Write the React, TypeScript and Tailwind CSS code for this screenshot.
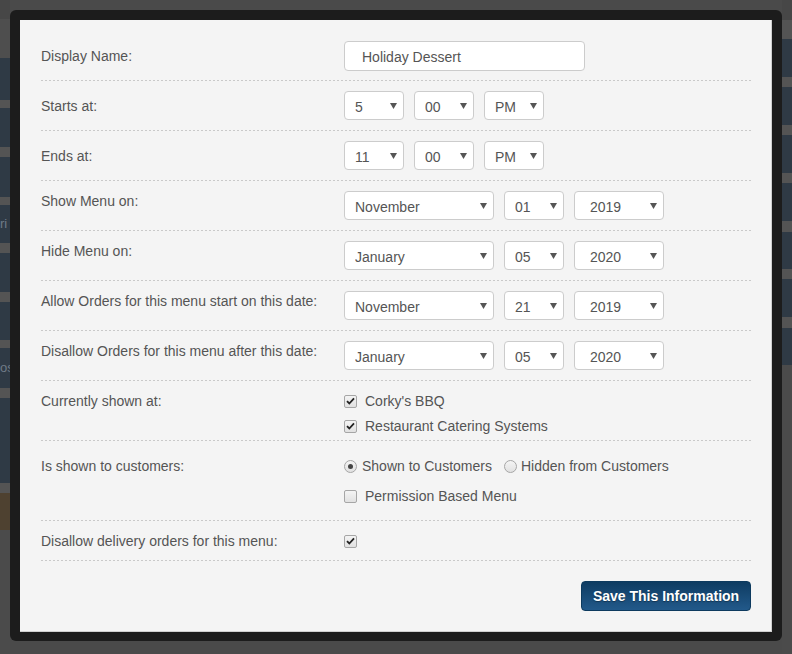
import type { ReactNode } from 'react'

// Menu settings modal over a dimmed page

const font = "font-['Liberation_Sans',Arial,sans-serif]"

function Divider() {
  return <div className="h-px bg-[image:repeating-linear-gradient(90deg,#c9c9c9_0_2px,transparent_2px_4px)]" />
}

function Arrow() {
  return (
    <svg width="7" height="6" viewBox="0 0 7 6" className="pointer-events-none absolute right-[7px] top-[12px]">
      <path d="M0 0h7L3.5 6z" fill="#555" />
    </svg>
  )
}

function Select({ value, className, pad }: { value: string; className: string; pad: string }) {
  return (
    <div className={`relative ${className}`}>
      <select defaultValue={value}
        className={`h-[29px] w-full appearance-none rounded-[4px] border border-[#cccccc] bg-white pt-[3px] text-[14px] text-[#555] outline-none ${pad}`}>
        <option>{value}</option>
      </select>
      <Arrow />
    </div>
  )
}

function Check({ checked }: { checked?: boolean }) {
  return (
    <span className="flex h-[13px] w-[13px] shrink-0 items-center justify-center rounded-[2px] border border-[#a6a6a6] bg-[linear-gradient(#f4f4f4,#e1e1e1)]">
      {checked && (
        <svg width="9" height="8" viewBox="0 0 9 8">
          <path d="M1 4.2l2.3 2.3L8 1.3" fill="none" stroke="#222" strokeWidth="1.8" />
        </svg>
      )}
    </span>
  )
}

function Radio({ checked }: { checked?: boolean }) {
  return (
    <span className="flex h-[13px] w-[13px] shrink-0 items-center justify-center rounded-full border border-[#a6a6a6] bg-[linear-gradient(#f4f4f4,#e1e1e1)]">
      {checked && <span className="h-[5px] w-[5px] rounded-full bg-[#444]" />}
    </span>
  )
}

function Row({ label, children, align = 'center', className = 'py-[10px]' }: {
  label: string; children: ReactNode; align?: 'center' | 'top'; className?: string
}) {
  return (
    <>
      <div className={`flex ${align === 'center' ? 'items-center' : 'items-start'} ${className}`}>
        <div className="w-[303px] shrink-0 leading-[20px]">{label}</div>
        <div className="flex-1">{children}</div>
      </div>
      <Divider />
    </>
  )
}

function TimeRow({ label, hour }: { label: string; hour: string }) {
  return (
    <Row label={label}>
      <div className="flex gap-[10px]">
        <Select value={hour} className="w-[60px]" pad="pl-[10px]" />
        <Select value="00" className="w-[60px]" pad="pl-[10px]" />
        <Select value="PM" className="w-[60px]" pad="pl-[10px]" />
      </div>
    </Row>
  )
}

function DateRow({ label, month, day, year }: { label: string; month: string; day: string; year: string }) {
  return (
    <Row label={label} align="top">
      <div className="flex gap-[10px]">
        <Select value={month} className="w-[150px]" pad="pl-[10px]" />
        <Select value={day} className="w-[60px]" pad="pl-[10px]" />
        <Select value={year} className="w-[90px]" pad="pl-[15px]" />
      </div>
    </Row>
  )
}

const leftStrip: [string, number, string?][] = [
  ['#474747', 19], ['#4e4e4e', 39], ['#2f3a45', 42], ['#545454', 8], ['#2f3a45', 39], ['#545454', 10],
  ['#2f3a45', 40], ['#545454', 8], ['#2f3a45', 38, 'ri'], ['#545454', 10], ['#2f3a45', 39], ['#545454', 10],
  ['#2f3a45', 38], ['#545454', 8], ['#2f3a45', 40, 'os'], ['#545454', 10], ['#2f3a45', 85], ['#545454', 10],
  ['#4e4130', 37], ['#4b4b4b', 124],
]

const rightStrip: [string, number][] = [
  ['#474747', 20], ['#545454', 19], ['#2f3a45', 38], ['#545454', 10], ['#2f3a45', 38], ['#545454', 10],
  ['#2f3a45', 38], ['#545454', 10], ['#2f3a45', 38], ['#545454', 11], ['#2f3a45', 37], ['#545454', 10],
  ['#2f3a45', 38], ['#545454', 11], ['#2f3a45', 37], ['#4b4b4b', 289],
]

function Strip({ items }: { items: [string, number, string?][] }) {
  return (
    <div className="flex w-[10px] shrink-0 flex-col overflow-hidden">
      {items.map(([c, h, t], i) => (
        <div key={i} style={{ background: c, height: h }}
          className="flex shrink-0 items-center overflow-hidden whitespace-nowrap text-[13px] text-[#6f7b87]">
          {t}
        </div>
      ))}
    </div>
  )
}

export default function App() {
  return (
    <div className={`flex h-[654px] w-[792px] overflow-hidden bg-[#4b4b4b] ${font}`}>
      <Strip items={leftStrip} />
      <div className="w-[772px] shrink-0 bg-[#4a4a4a] pt-[10px]">
        <div className="rounded-[6px] bg-[#1c1c1c] p-[10px] pb-[9px]">
          <div className="bg-[#f4f4f4] px-[21px] pb-[21px] pt-[11px] text-[14px] text-[#555] shadow-[inset_-1px_-1px_0_#cfcfcf]">
            <Row label="Display Name:" className="pb-[9px] pt-[10px]">
              <input defaultValue="Holiday Dessert"
                className="h-[30px] w-[241px] rounded-[4px] border border-[#cccccc] bg-white pl-[17px] pt-[2px] text-[14px] text-[#555] outline-none" />
            </Row>
            <TimeRow label="Starts at:" hour="5" />
            <TimeRow label="Ends at:" hour="11" />
            <DateRow label="Show Menu on:" month="November" day="01" year="2019" />
            <DateRow label="Hide Menu on:" month="January" day="05" year="2020" />
            <DateRow label="Allow Orders for this menu start on this date:" month="November" day="21" year="2019" />
            <DateRow label="Disallow Orders for this menu after this date:" month="January" day="05" year="2020" />

            <Row label="Currently shown at:" align="top" className="pb-[4px] pt-[10px]">
              <div className="flex flex-col gap-[5px] leading-[20px]">
                <label className="flex items-center gap-[8px]"><Check checked />Corky's BBQ</label>
                <label className="flex items-center gap-[8px]"><Check checked />Restaurant Catering Systems</label>
              </div>
            </Row>

            <Row label="Is shown to customers:" align="top" className="pb-[14px] pt-[15px]">
              <div className="flex flex-col gap-[10px] leading-[20px]">
                <div className="flex items-center">
                  <label className="flex items-center gap-[5px]"><Radio checked />Shown to Customers</label>
                  <label className="ml-[12px] flex items-center gap-[4px]"><Radio />Hidden from Customers</label>
                </div>
                <label className="flex items-center gap-[8px]"><Check />Permission Based Menu</label>
              </div>
            </Row>

            <Row label="Disallow delivery orders for this menu:" align="top" className="pb-[9px] pt-[10px]">
              <div className="flex h-[20px] items-center"><Check checked /></div>
            </Row>

            <div className="mt-[20px] flex justify-end">
              <button className="h-[30px] w-[170px] rounded-[4px] border border-[#0d3a5e] bg-[linear-gradient(#0e3c62,#22598a)] text-[14px] font-bold text-white [text-shadow:0_1px_1px_rgba(0,0,0,0.35)]">
                Save This Information
              </button>
            </div>
          </div>
        </div>
      </div>
      <Strip items={rightStrip} />
    </div>
  )
}
